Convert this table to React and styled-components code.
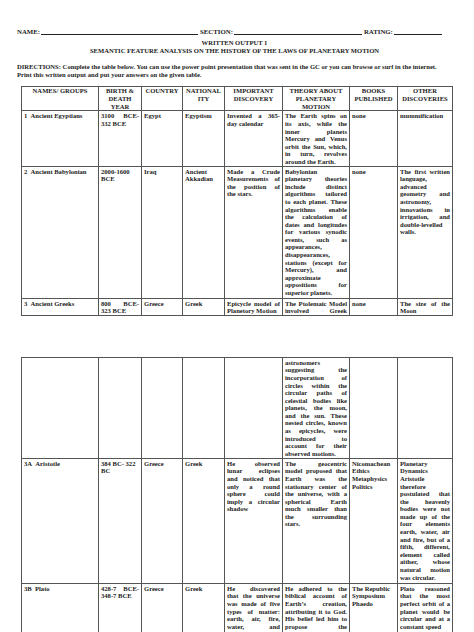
import React from 'react';
import styled, { createGlobalStyle } from 'styled-components';

const GlobalStyle = createGlobalStyle`
  html, body {
    margin: 0;
    padding: 0;
    background: #fff;
    overflow: hidden;
  }
  body {
    font-family: "Liberation Serif", "Times New Roman", serif;
    color: #1c1c1c;
  }
`;

const COLS = [77, 43, 41, 42, 58, 67, 48, 55];

const HEAD = [
  'NAMES/ GROUPS',
  'BIRTH &\nDEATH\nYEAR',
  'COUNTRY',
  'NATIONAL\nITY',
  'IMPORTANT\nDISCOVERY',
  'THEORY ABOUT\nPLANETARY\nMOTION',
  'BOOKS\nPUBLISHED',
  'OTHER\nDISCOVERIES',
];

const c = (t, j = false, open = false) => ({ t, j, open });
const sp = '\u00a0\u00a0';

const PAGE_ONE = [
  {
    h: 54,
    cells: [
      c(`1${sp}Ancient Egyptians`),
      c('3100 BCE-\n332 BCE', true),
      c('Egypt'),
      c('Egyptism'),
      c('Invented a 365-\nday calendar', true),
      c(
        'The Earth spins on\nits axis, while the\ninner planets\nMercury and Venus\norbit the Sun, which,\nin turn, revolves\naround the Earth.',
        true
      ),
      c('none'),
      c('mummification'),
    ],
  },
  {
    h: 132,
    cells: [
      c(`2${sp}Ancient Babylonian`),
      c('2000-1600\nBCE'),
      c('Iraq'),
      c('Ancient\nAkkadian'),
      c('Made a Crude\nMeasurements of\nthe position of\nthe stars.', true),
      c(
        'Babylonian\nplanetary theories\ninclude distinct\nalgorithms tailored\nto each planet. These\nalgorithms enable\nthe calculation of\ndates and longitudes\nfor various synodic\nevents, such as\nappearances,\ndisappearances,\nstations (except for\nMercury), and\napproximate\noppositions for\nsuperior planets.',
        true
      ),
      c('none'),
      c(
        'The first written\nlanguage,\nadvanced\ngeometry and\nastronomy,\ninnovations in\nirrigation, and\ndouble-levelled\nwalls.',
        true
      ),
    ],
  },
  {
    h: 17,
    cells: [
      c(`3${sp}Ancient Greeks`),
      c('800 BCE-\n323 BCE', true),
      c('Greece'),
      c('Greek'),
      c('Epicycle model of\nPlanetory Motion', true),
      c('The Ptolemaic Model\ninvolved Greek', true, true),
      c('none'),
      c('The size of the\nMoon', true),
    ],
  },
];

const PAGE_TWO = [
  {
    h: 101,
    cells: [
      c(''),
      c(''),
      c(''),
      c(''),
      c(''),
      c(
        'astronomers\nsuggesting the\nincorporation of\ncircles within the\ncircular paths of\ncelestial bodies like\nplanets, the moon,\nand the sun. These\nnested circles, known\nas epicycles, were\nintroduced to\naccount for their\nobserved motions.',
        true
      ),
      c(''),
      c(''),
    ],
  },
  {
    h: 125,
    cells: [
      c(`3A${sp}Aristotle`),
      c('384 BC- 322\nBC'),
      c('Greece'),
      c('Greek'),
      c(
        'He observed\nlunar eclipses\nand noticed that\nonly a round\nsphere could\nimply a circular\nshadow',
        true
      ),
      c(
        'The geocentric\nmodel proposed that\nEarth was the\nstationary center of\nthe universe, with a\nspherical Earth\nmuch smaller than\nthe surrounding\nstars.',
        true
      ),
      c('Nicomachean\nEthics\nMetaphysics\nPolitics'),
      c(
        'Planetary\nDynamics\nAristotle\ntherefore\npostulated that\nthe heavenly\nbodies were not\nmade up of the\nfour elements\nearth, water, air\nand fire, but of a\nfifth, different,\nelement called\naither, whose\nnatural motion\nwas circular.',
        true
      ),
    ],
  },
  {
    h: 80,
    cells: [
      c(`3B${sp}Plato`),
      c('428-7 BCE-\n348-7 BCE', true),
      c('Greece'),
      c('Greek'),
      c(
        'He discovered\nthat the universe\nwas made of five\ntypes of matter:\nearth, air, fire,\nwater, and\ncosmos.',
        true
      ),
      c(
        'He adhered to the\nbiblical account of\nEarth\u2019s creation,\nattributing it to God.\nHis belief led him to\npropose the\ngeocentric model of\nthe universe.',
        true
      ),
      c('The Republic\nSymposium\nPhaedo'),
      c(
        'Plato reasoned\nthat the most\nperfect orbit of a\nplanet would be\ncircular and at a\nconstant speed',
        true
      ),
    ],
  },
];

const Page = styled.div`
  width: 474px;
  height: 632px;
  overflow: hidden;
  box-sizing: border-box;
  padding: 28px 22px 0 17px;
  font-weight: 700;
  font-size: 6.6px;
  line-height: 7.6px;
`;

const InfoRow = styled.div`
  display: flex;
  align-items: flex-end;
  white-space: nowrap;
  font-size: 6.8px;
`;

const Blank = styled.span`
  display: inline-block;
  width: ${(p) => p.$w}px;
  height: 6px;
  margin: 0 2px 1px 1px;
  border-bottom: 0.8px solid #222;
`;

const Title = styled.div`
  margin-top: 3px;
  text-align: center;
  white-space: nowrap;
`;

const Directions = styled.p`
  margin: 9px 0 0;
  white-space: nowrap;
`;

const Sheet = styled.table`
  margin: ${(p) => p.$top}px 0 0 4px;
  width: 431px;
  table-layout: fixed;
  border-collapse: collapse;
  font-size: 6.6px;
  line-height: 7.6px;
`;

const Col = styled.col`
  width: ${(p) => p.$w}px;
`;

const Row = styled.tr`
  height: ${(p) => p.$h}px;
`;

const HeadCell = styled.th`
  padding: 0 2px;
  border: 1px solid #555;
  vertical-align: top;
  text-align: center;
  font-weight: 700;
`;

const Cell = styled.td`
  padding: 1px 2px 0;
  border: 1px solid #555;
  vertical-align: top;
  text-align: left;
  overflow: hidden;
`;

const Line = styled.span`
  display: block;
  white-space: nowrap;
  text-align: ${(p) => (p.$justify ? 'justify' : 'left')};
  text-align-last: ${(p) => (p.$justify ? 'justify' : 'left')};
`;

function CellText({ cell }) {
  const lines = cell.t ? cell.t.split('\n') : [];
  return lines.map((line, i) => {
    const isLast = i === lines.length - 1;
    const justify = cell.j && (!isLast || cell.open);
    return (
      <Line key={i} $justify={justify}>
        {line}
      </Line>
    );
  });
}

function Table({ rows, top, withHead }) {
  return (
    <Sheet $top={top}>
      <colgroup>
        {COLS.map((w, i) => (
          <Col key={i} $w={w} />
        ))}
      </colgroup>
      <tbody>
        {withHead && (
          <Row $h={24}>
            {HEAD.map((h, i) => (
              <HeadCell key={i}>
                {h.split('\n').map((l, k) => (
                  <div key={k}>{l}</div>
                ))}
              </HeadCell>
            ))}
          </Row>
        )}
        {rows.map((row, i) => (
          <Row key={i} $h={row.h}>
            {row.cells.map((cell, k) => (
              <Cell key={k}>
                <CellText cell={cell} />
              </Cell>
            ))}
          </Row>
        ))}
      </tbody>
    </Sheet>
  );
}

export default function App() {
  return (
    <>
      <GlobalStyle />
      <Page>
        <InfoRow>
          NAME:
          <Blank $w={157} />
          SECTION:
          <Blank $w={128} />
          RATING:
          <Blank $w={48} />
        </InfoRow>
        <Title>
          WRITTEN OUTPUT 1
          <br />
          SEMANTIC FEATURE ANALYSIS ON THE HISTORY OF THE LAWS OF PLANETARY MOTION
        </Title>
        <Directions>
          DIRECTIONS: Complete the table below. You can use the power point presentation that was
          sent in the GC or you can browse or surf in the internet.
          <br />
          Print this written output and put your answers on the given table.
        </Directions>
        <Table rows={PAGE_ONE} top={8} withHead />
        <Table rows={PAGE_TWO} top={41} />
      </Page>
    </>
  );
}
